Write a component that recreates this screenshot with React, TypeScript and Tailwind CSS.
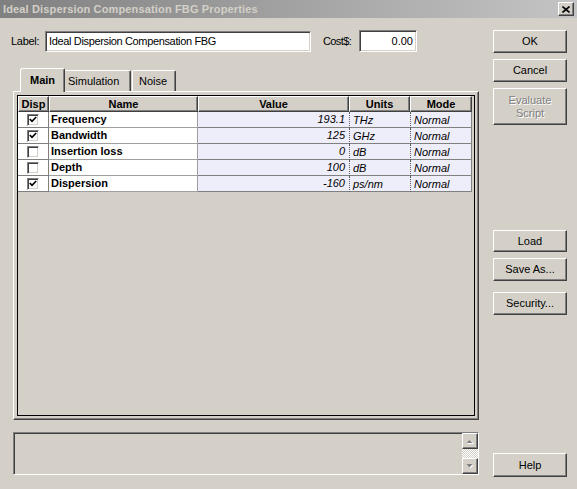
import React from 'react';

const raised =
  'border border-t-white border-l-white border-r-[#404040] border-b-[#404040] shadow-[inset_-1px_-1px_0_#808080]';
const sunken =
  'border border-t-[#808080] border-l-[#808080] border-r-white border-b-white shadow-[inset_1px_1px_0_#404040,inset_-1px_-1px_0_#d4d0c8]';

function Btn({ children, className = '', disabled = false }: { children: React.ReactNode; className?: string; disabled?: boolean }) {
  return (
    <div
      className={`${raised} w-[74px] bg-[#d4d0c8] flex flex-col items-center justify-center text-[11px] leading-[13px] ${
        disabled ? 'text-[#808080] [text-shadow:1px_1px_0_#ffffff]' : 'text-black'
      } ${className}`}
    >
      {children}
    </div>
  );
}

function Check({ checked }: { checked: boolean }) {
  return (
    <div className={`${sunken} w-[12px] h-[12px] bg-white flex items-center justify-center`}>
      {checked && (
        <svg width="8" height="7" viewBox="0 0 8 7">
          <path d="M0.8 3 L3 5.3 L7.2 1" fill="none" stroke="#000" strokeWidth="1.7" />
        </svg>
      )}
    </div>
  );
}

const rows = [
  { on: true, name: 'Frequency', value: '193.1', unit: 'THz' },
  { on: true, name: 'Bandwidth', value: '125', unit: 'GHz' },
  { on: false, name: 'Insertion loss', value: '0', unit: 'dB' },
  { on: false, name: 'Depth', value: '100', unit: 'dB' },
  { on: true, name: 'Dispersion', value: '-160', unit: 'ps/nm' },
];

const headers = [
  { t: 'Disp', w: 'w-[31px]' },
  { t: 'Name', w: 'w-[149px]' },
  { t: 'Value', w: 'w-[151px]' },
  { t: 'Units', w: 'w-[61px]' },
  { t: 'Mode', w: 'w-[62px]' },
];

function Arrow({ up }: { up: boolean }) {
  return (
    <div className={`${raised} h-[16px] bg-[#d4d0c8] flex items-center justify-center`}>
      <svg width="8" height="5" viewBox="0 0 8 5">
        {up ? (
          <>
            <path d="M1 5 L4.5 1.5 L8 5 Z" fill="#ffffff" />
            <path d="M0.5 4 L3.5 1 L6.5 4 Z" fill="#808080" />
          </>
        ) : (
          <>
            <path d="M1.5 1 L7.5 1 L4.5 4.5 Z" fill="#ffffff" />
            <path d="M0.5 0 L6.5 0 L3.5 3.5 Z" fill="#808080" />
          </>
        )}
      </svg>
    </div>
  );
}

export default function App() {
  return (
    <div className="w-[577px] h-[489px] bg-[#d4d0c8] flex flex-col overflow-hidden font-['Liberation_Sans',Arial,sans-serif] text-[11px] text-black">
      {/* Title bar */}
      <div className="h-[18px] flex items-center justify-between bg-[linear-gradient(90deg,#808080,#c4c4c4)] pl-[3px] pr-[3px]">
        <span className="font-bold text-[11px] text-[#d4d0c8] tracking-[0.15px] leading-none">
          Ideal Dispersion Compensation FBG Properties
        </span>
        <div className={`${raised} w-[16px] h-[14px] bg-[#d4d0c8] flex items-center justify-center`}>
          <svg width="8" height="7" viewBox="0 0 8 7">
            <path d="M0.5 0.5 L7.5 6.5 M7.5 0.5 L0.5 6.5" stroke="#000" strokeWidth="1.6" />
          </svg>
        </div>
      </div>

      <div className="flex flex-1">
        {/* Left column */}
        <div className="w-[479px] flex flex-col">
          <div className="flex items-center mt-[12px] h-[22px] pl-[11px]">
            <span className="w-[34px] tracking-[-0.3px]">Label:</span>
            <div className={`${sunken} w-[266px] h-[21px] bg-white flex items-center pl-[3px] tracking-[-0.35px]`}>
              Ideal Dispersion Compensation FBG
            </div>
            <span className="ml-[12px] w-[36px] tracking-[-0.6px]">Cost$:</span>
            <div className={`${sunken} w-[58px] h-[22px] bg-white flex items-center justify-end pr-[3px]`}>
              0.00
            </div>
          </div>

          {/* Tabs */}
          <div className="flex items-end mt-[16px] ml-[20px] h-[23px] relative z-10">
            <div className="h-[24px] -mb-px w-[45px] bg-[#d4d0c8] border-t border-l border-r border-t-white border-l-white border-r-[#404040] shadow-[inset_-1px_0_0_#808080] rounded-tl-[3px] rounded-tr-[2px] flex items-center justify-center pb-[1px] font-bold">
              Main
            </div>
            <div className="h-[21px] w-[66px] border-t border-r border-t-white border-r-[#404040] shadow-[inset_-1px_0_0_#808080] rounded-tr-[2px] flex items-center pl-[3px]">
              Simulation
            </div>
            <div className="h-[21px] w-[44px] ml-[1px] border-t border-l border-r border-t-white border-l-white border-r-[#404040] shadow-[inset_-1px_0_0_#808080] rounded-tl-[2px] rounded-tr-[2px] flex items-center pl-[6px]">
              Noise
            </div>
          </div>

          {/* Panel */}
          <div className="ml-[13px] w-[466px] h-[329px] border border-t-white border-l-white border-r-[#404040] border-b-[#404040] shadow-[inset_-1px_-1px_0_#808080] p-[3px] flex">
            <div className="flex-1 border border-black bg-[#d4d0c8] flex flex-col">
              {/* Header */}
              <div className="flex h-[16px]">
                {headers.map((h) => (
                  <div
                    key={h.t}
                    className={`${h.w} ${raised} h-[16px] flex items-center justify-center font-bold leading-none`}
                  >
                    {h.t}
                  </div>
                ))}
              </div>
              {rows.map((r) => (
                <div key={r.name} className="flex h-[16px]">
                  <div className="w-[31px] h-[16px] bg-white border-r border-b border-[#808080] flex items-center justify-center">
                    <Check checked={r.on} />
                  </div>
                  <div className="w-[149px] h-[16px] bg-white border-r border-b border-[#a0a0a0] flex items-center pl-[2px] font-bold leading-none">
                    {r.name}
                  </div>
                  <div className="w-[151px] h-[16px] bg-[#eeeefa] border-b border-b-[#808080] flex items-center justify-end pr-[4px] italic leading-none">
                    {r.value}
                  </div>
                  <div className="w-[61px] h-[16px] bg-[#eeeefa] border-l border-dotted border-l-[#606060] flex items-center pl-[3px] italic leading-none shadow-[inset_0_-1px_0_#808080]">
                    {r.unit}
                  </div>
                  <div className="w-[62px] h-[16px] bg-[#eeeefa] border-l border-dotted border-l-[#606060] flex items-center pl-[3px] italic leading-none shadow-[inset_0_-1px_0_#808080,inset_-1px_0_0_#808080]">
                    Normal
                  </div>
                </div>
              ))}
            </div>
          </div>

          {/* Bottom status box */}
          <div className="ml-[13px] mt-[12px] w-[466px] h-[43px] border border-t-[#808080] border-l-[#808080] border-r-white border-b-white shadow-[inset_1px_1px_0_#404040] flex justify-end">
            <div className="w-[16px] flex flex-col">
              <Arrow up />
              <div className="flex-1 bg-[repeating-conic-gradient(#ffffff_0%_25%,#d4d0c8_0%_50%)] bg-[length:2px_2px]" />
              <Arrow up={false} />
            </div>
          </div>
        </div>

        {/* Right buttons */}
        <div className="ml-[14px] flex flex-col">
          <Btn className="mt-[12px] h-[23px]">OK</Btn>
          <Btn className="mt-[6px] h-[23px]">Cancel</Btn>
          <Btn className="mt-[6px] h-[37px]" disabled>
            <span>Evaluate</span>
            <span>Script</span>
          </Btn>
          <Btn className="mt-[105px] h-[22px]">Load</Btn>
          <Btn className="mt-[6px] h-[23px]">Save As...</Btn>
          <Btn className="mt-[11px] h-[23px]">Security...</Btn>
          <Btn className="mt-[138px] h-[24px]">Help</Btn>
        </div>
      </div>
    </div>
  );
}
